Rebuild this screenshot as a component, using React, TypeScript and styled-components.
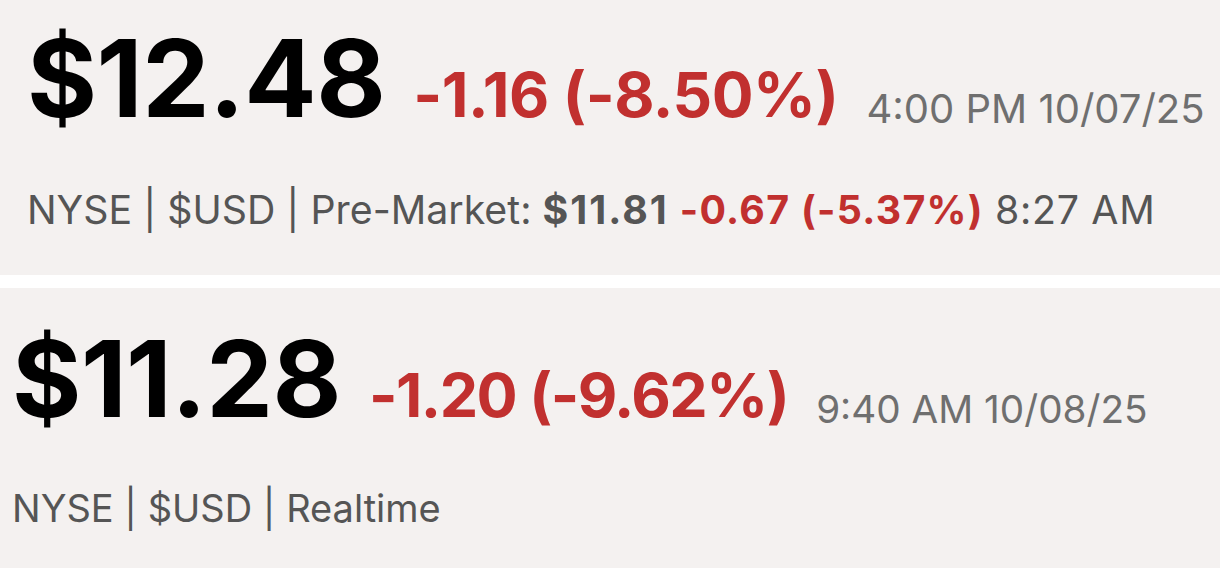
import React from "react";
import styled, { createGlobalStyle } from "styled-components";

const Global = createGlobalStyle`
  html, body { margin: 0; padding: 0; background: #ffffff; }
  body { font-family: Inter, "Noto Sans", "Liberation Sans", sans-serif; -webkit-font-smoothing: antialiased; }
`;

const Page = styled.main`
  display: flex;
  flex-direction: column;
  gap: 13px;
  width: 1220px;
`;

const Panel = styled.section<{ $inset: number; $top: number; $height: number; $gap: number }>`
  display: flex;
  flex-direction: column;
  gap: ${(p) => p.$gap}px;
  box-sizing: border-box;
  height: ${(p) => p.$height}px;
  padding: ${(p) => p.$top}px 0 0 ${(p) => p.$inset}px;
  background: #f4f1f0;
  overflow: hidden;
`;

const PriceLine = styled.div`
  white-space: nowrap;
  font-size: 10px;
  line-height: 1;
`;

const Price = styled.span<{ $size: number }>`
  font-size: ${(p) => p.$size}px;
  font-weight: 700;
  color: #000000;
  letter-spacing: -0.5px;
  line-height: 1;
`;

const Change = styled.span<{ $size: number; $track: number }>`
  margin-left: 28px;
  font-size: ${(p) => p.$size}px;
  font-weight: 700;
  color: #c1302f;
  letter-spacing: ${(p) => p.$track}px;
  line-height: 1;
`;

const Stamp = styled.span<{ $size: number }>`
  margin-left: 28px;
  font-size: ${(p) => p.$size}px;
  font-weight: 400;
  color: #6f6f6f;
  line-height: 1;
  vertical-align: -6px;
`;

const Meta = styled.div<{ $size: number }>`
  white-space: nowrap;
  font-size: ${(p) => p.$size}px;
  line-height: 1;
  color: #555555;
`;

const Strong = styled.b`
  font-weight: 700;
  color: #555555;
  letter-spacing: 2px;
`;

const Down = styled.span`
  font-weight: 700;
  color: #c1302f;
  letter-spacing: 1.3px;
`;

const Time = styled.span`
  letter-spacing: 0.7px;
`;

type Quote = {
  price: string;
  change: string;
  stamp: string;
  priceSize: number;
  changeSize: number;
  changeTrack: number;
  stampSize: number;
  metaSize: number;
  inset: number;
  top: number;
  height: number;
  gap: number;
  meta: React.ReactNode;
};

const quotes: Quote[] = [
  {
    price: "$12.48",
    change: "-1.16 (-8.50%)",
    stamp: "4:00 PM 10/07/25",
    priceSize: 107,
    changeSize: 62,
    changeTrack: -0.5,
    stampSize: 40,
    metaSize: 39.3,
    inset: 27,
    top: 25,
    height: 275,
    gap: 58,
    meta: (
      <>
        NYSE | $USD | Pre-Market: <Strong>$11.81</Strong> <Down>-0.67 (-5.37%)</Down>{" "}
        <Time>8:27 AM</Time>
      </>
    ),
  },
  {
    price: "$11.28",
    change: "-1.20 (-9.62%)",
    stamp: "9:40 AM 10/08/25",
    priceSize: 106,
    changeSize: 61,
    changeTrack: -1.5,
    stampSize: 38.7,
    metaSize: 38,
    inset: 12,
    top: 38,
    height: 280,
    gap: 57,
    meta: <>NYSE | $USD | Realtime</>,
  },
];

export default function App() {
  return (
    <>
      <Global />
      <Page>
        {quotes.map((q) => (
          <Panel key={q.price} $inset={q.inset} $top={q.top} $height={q.height} $gap={q.gap}>
            <PriceLine>
              <Price $size={q.priceSize}>{q.price}</Price>
              <Change $size={q.changeSize} $track={q.changeTrack}>
                {q.change}
              </Change>
              <Stamp $size={q.stampSize}>{q.stamp}</Stamp>
            </PriceLine>
            <Meta $size={q.metaSize}>{q.meta}</Meta>
          </Panel>
        ))}
      </Page>
    </>
  );
}
